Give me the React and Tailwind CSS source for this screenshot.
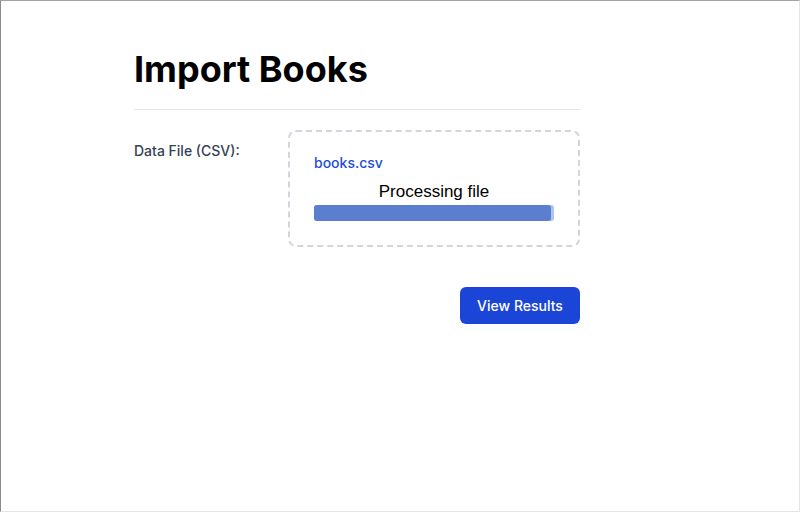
export default function App() {
  return (
    <div className="h-[512px] w-[800px] overflow-hidden bg-white border-t border-l border-t-[#a3a3a3] border-l-[#8a8a8a] border-r border-b border-r-[#e5e5e5] border-b-[#e5e5e5]" style={{ fontFamily: "Inter, 'Noto Sans', sans-serif" }}>
      <div className="pl-[133px] pt-[48px]">
        <div className="w-[446px]">
          <h1 className="text-4xl leading-10 font-bold text-black">Import Books</h1>
          <div className="mt-[20px] h-px bg-gray-200" />
          <div className="mt-[20px] grid grid-cols-3 gap-4">
            <div className="pt-[11px] text-sm font-medium text-gray-700">Data File (CSV):</div>
            <div className="col-span-2 rounded-lg border-2 border-dashed border-gray-300 px-6 pt-[21px] pb-[24px]">
              <div className="text-sm font-medium text-[#1d4ed8]">books.csv</div>
              <div className="mt-[8px] text-center text-[17px] leading-[21px] text-black" style={{ fontFamily: "'Liberation Sans', Arial, sans-serif" }}>Processing file</div>
              <div className="relative mt-[3px] h-4 w-full rounded-[3px] bg-[#a9c6f5]">
                <div className="h-4 w-[237px] rounded-[3px] bg-[#5c7ecf]" />
              </div>
            </div>
          </div>
          <div className="mt-[40px] flex justify-end">
            <button className="h-[37px] w-[120px] rounded-md bg-[#1b45d6] text-sm font-medium text-white">View Results</button>
          </div>
        </div>
      </div>
    </div>
  );
}
